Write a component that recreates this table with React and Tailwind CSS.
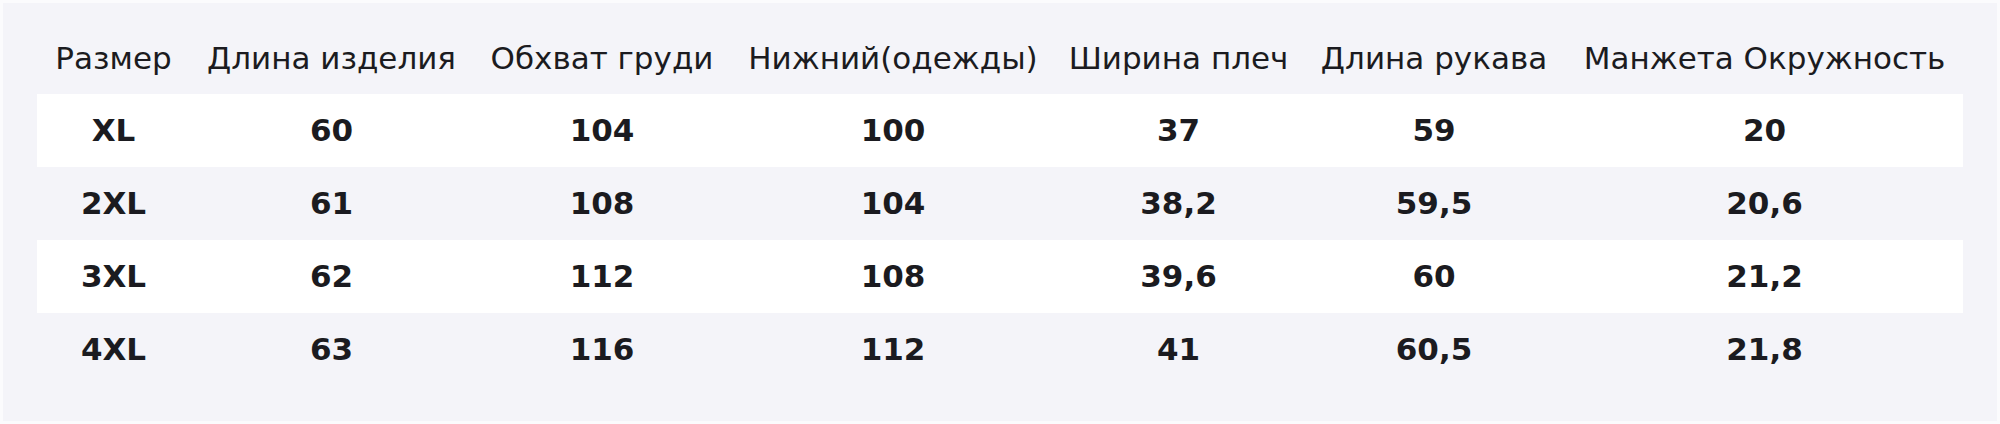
import React from "react";

const headers = [
  "Размер",
  "Длина изделия",
  "Обхват груди",
  "Нижний(одежды)",
  "Ширина плеч",
  "Длина рукава",
  "Манжета Окружность",
];

const rows = [
  ["XL", "60", "104", "100", "37", "59", "20"],
  ["2XL", "61", "108", "104", "38,2", "59,5", "20,6"],
  ["3XL", "62", "112", "108", "39,6", "60", "21,2"],
  ["4XL", "63", "116", "112", "41", "60,5", "21,8"],
];

// column widths measured from the picture
const cols = "grid grid-cols-[153px_283px_258px_324px_247px_264px_397px]";

const App = () => {
  return (
    <div className="w-[2000px] h-[424px] bg-[#fbfbfd] p-[3px] font-['DejaVu_Sans',sans-serif] text-[#1b1b20]">
      <div className="h-full bg-[#f4f4f9] px-[34px] pt-[19px]">
        {/* header */}
        <div className={`${cols} h-[72px] items-center text-[31px]`}>
          {headers.map((h) => (
            <div key={h} className="text-center whitespace-nowrap">
              {h}
            </div>
          ))}
        </div>

        {/* size rows */}
        {rows.map((row, i) => (
          <div
            key={row[0]}
            className={`${cols} h-[73px] items-center text-[31px] font-bold ${
              i % 2 === 0 ? "bg-white" : ""
            }`}
          >
            {row.map((cell, j) => (
              <div key={j} className="text-center whitespace-nowrap">
                {cell}
              </div>
            ))}
          </div>
        ))}
      </div>
    </div>
  );
};

export default App;
